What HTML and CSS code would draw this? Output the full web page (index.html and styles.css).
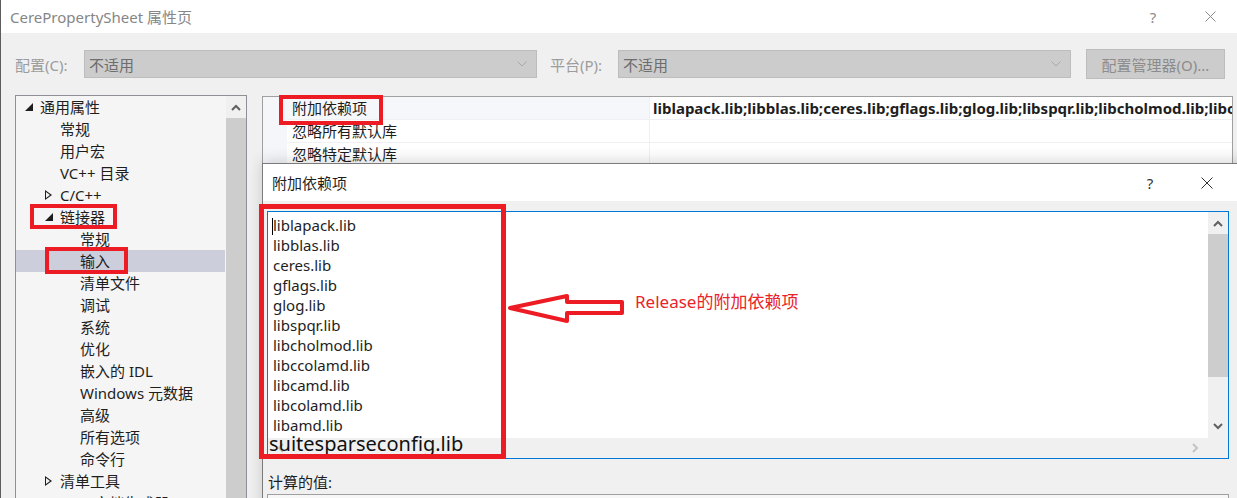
FILE: index.html
```html
<!DOCTYPE html>
<html lang="zh-CN">
<head>
    <meta charset="UTF-8">
    <title>CerePropertySheet 属性页</title>
    <link rel="stylesheet" href="styles.css">
</head>
<body>
    <!-- 属性页主窗口 -->
    <div class="window">
        <div class="titlebar">
            <span class="title">CerePropertySheet 属性页</span>
            <div class="caption">
                <span class="cap-btn help">?</span>
                <span class="cap-btn close">
                    <svg width="11" height="11" viewBox="0 0 11 11"><path d="M0.5 0.5 L10.5 10.5 M10.5 0.5 L0.5 10.5" stroke="#8a8a8a" stroke-width="1" fill="none"/></svg>
                </span>
            </div>
        </div>

        <div class="config-bar">
            <label class="lbl-config">配置(C):</label>
            <div class="combo">
                <span>不适用</span>
                <svg width="10" height="6" viewBox="0 0 10 6"><path d="M0.5 0.5 L5 5 L9.5 0.5" stroke="#a8a8a8" fill="none"/></svg>
            </div>
            <label class="lbl-platform">平台(P):</label>
            <div class="combo">
                <span>不适用</span>
                <svg width="10" height="6" viewBox="0 0 10 6"><path d="M0.5 0.5 L5 5 L9.5 0.5" stroke="#a8a8a8" fill="none"/></svg>
            </div>
            <button class="manager-btn">配置管理器(O)...</button>
        </div>

        <div class="main">
            <div class="tree">
                <ul class="tree-list">
                    <li class="lv0"><span class="exp open"></span>通用属性</li>
                    <li class="lv1"><span class="exp"></span>常规</li>
                    <li class="lv1"><span class="exp"></span>用户宏</li>
                    <li class="lv1"><span class="exp"></span>VC++ 目录</li>
                    <li class="lv1"><span class="exp shut"></span>C/C++</li>
                    <li class="lv1"><span class="exp open"></span>链接器</li>
                    <li class="lv2"><span class="exp"></span>常规</li>
                    <li class="lv2 selected"><span class="exp"></span>输入</li>
                    <li class="lv2"><span class="exp"></span>清单文件</li>
                    <li class="lv2"><span class="exp"></span>调试</li>
                    <li class="lv2"><span class="exp"></span>系统</li>
                    <li class="lv2"><span class="exp"></span>优化</li>
                    <li class="lv2"><span class="exp"></span>嵌入的 IDL</li>
                    <li class="lv2"><span class="exp"></span>Windows 元数据</li>
                    <li class="lv2"><span class="exp"></span>高级</li>
                    <li class="lv2"><span class="exp"></span>所有选项</li>
                    <li class="lv2"><span class="exp"></span>命令行</li>
                    <li class="lv1"><span class="exp shut"></span>清单工具</li>
                    <li class="lv1"><span class="exp shut"></span>XML 文档生成器</li>
                </ul>
                <div class="vscroll">
                    <div class="arrow-btn">
                        <svg width="10" height="7" viewBox="0 0 10 7"><path d="M1 6 L5 2 L9 6" stroke="#606060" stroke-width="2" fill="none"/></svg>
                    </div>
                    <div class="thumb tree-thumb"></div>
                </div>
            </div>

            <div class="grid">
                <div class="row">
                    <div class="gutter"></div>
                    <div class="name current">附加依赖项</div>
                    <div class="value">liblapack.lib;libblas.lib;ceres.lib;gflags.lib;glog.lib;libspqr.lib;libcholmod.lib;libccolamd.lib;libcamd.lib;libcolamd.lib;libamd.lib;suitesparseconfig.lib;%(AdditionalDependencies)</div>
                </div>
                <div class="row">
                    <div class="gutter"></div>
                    <div class="name">忽略所有默认库</div>
                    <div class="value"></div>
                </div>
                <div class="row">
                    <div class="gutter"></div>
                    <div class="name">忽略特定默认库</div>
                    <div class="value"></div>
                </div>
            </div>
        </div>
    </div>

    <!-- 附加依赖项 编辑对话框 -->
    <div class="dialog">
        <div class="dialog-title">
            <span class="title">附加依赖项</span>
            <div class="caption">
                <span class="cap-btn help">?</span>
                <span class="cap-btn close">
                    <svg width="12" height="12" viewBox="0 0 12 12"><path d="M0.5 0.5 L11.5 11.5 M11.5 0.5 L0.5 11.5" stroke="#333" stroke-width="1" fill="none"/></svg>
                </span>
            </div>
        </div>
        <div class="dialog-body">
            <div class="editbox">
                <div class="edit-text">
                    <div class="line"><span class="caret"></span>liblapack.lib</div>
                    <div class="line">libblas.lib</div>
                    <div class="line">ceres.lib</div>
                    <div class="line">gflags.lib</div>
                    <div class="line">glog.lib</div>
                    <div class="line">libspqr.lib</div>
                    <div class="line">libcholmod.lib</div>
                    <div class="line">libccolamd.lib</div>
                    <div class="line">libcamd.lib</div>
                    <div class="line">libcolamd.lib</div>
                    <div class="line">libamd.lib</div>
                    <div class="line big">suitesparseconfig.lib</div>
                </div>
                <div class="vscroll edit-vscroll">
                    <div class="arrow-btn">
                        <svg width="10" height="7" viewBox="0 0 10 7"><path d="M1 6 L5 2 L9 6" stroke="#606060" stroke-width="2" fill="none"/></svg>
                    </div>
                    <div class="thumb edit-thumb"></div>
                    <div class="spacer"></div>
                    <div class="arrow-btn down">
                        <svg width="10" height="7" viewBox="0 0 10 7"><path d="M1 1 L5 5 L9 1" stroke="#606060" stroke-width="2" fill="none"/></svg>
                    </div>
                </div>
                <div class="hscroll">
                    <svg width="7" height="10" viewBox="0 0 7 10"><path d="M6 1 L2 5 L6 9" stroke="#c4c4c4" stroke-width="2" fill="none"/></svg>
                    <svg width="7" height="10" viewBox="0 0 7 10"><path d="M1 1 L5 5 L1 9" stroke="#c4c4c4" stroke-width="2" fill="none"/></svg>
                </div>
                <div class="corner"></div>
            </div>
            <div class="result-label">计算的值:</div>
            <div class="result-box"></div>
        </div>
    </div>

    <!-- 红框标注 -->
    <div class="mark mark-dep"></div>
    <div class="mark mark-linker"></div>
    <div class="mark mark-input"></div>
    <div class="mark mark-list"></div>

    <svg class="callout-arrow" width="130" height="40" viewBox="0 0 130 40">
        <path d="M10 18 L67 6 L67 12 L122 12 L122 23 L67 23 L67 31 Z" stroke="#ed1c24" stroke-width="4" stroke-linejoin="round" fill="none"/>
    </svg>
    <div class="callout-text">Release的附加依赖项</div>
</body>
</html>
```

FILE: styles.css
```css
* {
    box-sizing: border-box;
}

html, body {
    margin: 0;
    padding: 0;
}

body {
    position: relative;
    width: 1237px;
    height: 498px;
    overflow: hidden;
    background-color: #f0f0f0;
    font-family: "Noto Sans", "Noto Sans CJK SC", sans-serif;
    font-size: 15px;
    color: #1e1e1e;
}

.window {
    height: 498px;
    border-left: 1px solid #5c5c5c;
}

/* 标题栏 */
.titlebar {
    height: 33px;
    background-color: #fff;
    display: flex;
    align-items: center;
    padding-left: 9px;
    padding-right: 4px;
}

.title {
    flex: 1;
    color: #868686;
    white-space: nowrap;
}

.caption {
    display: flex;
    align-items: center;
}

.cap-btn {
    width: 46px;
    display: flex;
    justify-content: center;
    align-items: center;
}

.cap-btn.close {
    margin-left: 11px;
}

.help {
    color: #8a8a8a;
    font-size: 15px;
}

/* 配置 / 平台 */
.config-bar {
    height: 62px;
    display: flex;
    align-items: center;
    padding-left: 14px;
}

.config-bar label {
    color: #9c9c9c;
    white-space: nowrap;
}

.lbl-config {
    width: 69px;
}

.lbl-platform {
    width: 68px;
    margin-left: 13px;
}

.combo {
    width: 453px;
    height: 28px;
    border: 1px solid #bdbdbd;
    background-color: #cccccc;
    color: #6d6d6d;
    display: flex;
    align-items: center;
    justify-content: space-between;
    padding: 0 9px 0 4px;
}

.manager-btn {
    margin-left: 15px;
    width: 139px;
    height: 30px;
    border: 1px solid #bdbdbd;
    background-color: #cccccc;
    color: #8c8c8c;
    font: inherit;
    padding: 0;
}

/* 左侧树 */
.main {
    display: flex;
    align-items: flex-start;
    padding-left: 14px;
}

.tree {
    width: 232px;
    height: 420px;
    border: 1px solid #8f9096;
    background-color: #f5f5f5;
    display: flex;
}

.tree-list {
    flex: 1;
    list-style: none;
    margin: 0;
    padding: 0;
}

.tree-list li {
    height: 22px;
    line-height: 22px;
    display: flex;
    align-items: center;
    white-space: nowrap;
    margin-right: 1px;
}

.lv0 { padding-left: 9px; }
.lv1 { padding-left: 29px; }
.lv2 { padding-left: 49px; }

.tree-list li.selected {
    background-color: #cccedb;
}

.exp {
    width: 15px;
    height: 10px;
    flex-shrink: 0;
    position: relative;
}

/* 展开: 实心三角 */
.exp.open::before {
    content: "";
    position: absolute;
    left: 0;
    top: 1px;
    border-style: solid;
    border-width: 0 0 8px 8px;
    border-color: transparent transparent #1e1e1e transparent;
}

/* 折叠: 空心三角 */
.exp.shut::before {
    content: "";
    position: absolute;
    left: 0;
    top: 0;
    border-style: solid;
    border-width: 5px 0 5px 7px;
    border-color: transparent transparent transparent #1e1e1e;
}

.exp.shut::after {
    content: "";
    position: absolute;
    left: 1px;
    top: 2px;
    border-style: solid;
    border-width: 3px 0 3px 4px;
    border-color: transparent transparent transparent #f5f5f5;
}

.vscroll {
    width: 20px;
    background-color: #f0f0f0;
    display: flex;
    flex-direction: column;
}

.arrow-btn {
    height: 22px;
    display: flex;
    justify-content: center;
    align-items: center;
    flex-shrink: 0;
}

.thumb {
    background-color: #cdcdcd;
}

.tree-thumb {
    flex: 1;
}

/* 属性网格 */
.grid {
    margin-left: 15px;
    margin-top: 1px;
    width: 971px;
    height: 90px;
    border: 1px solid #a0a0a0;
    background-color: #fff;
}

.row {
    display: grid;
    grid-template-columns: 24px 363px 1fr;
    height: 23px;
}

.gutter {
    background-color: #f4f6fa;
}

.name,
.value {
    line-height: 22px;
    border-bottom: 1px solid #eef0f3;
    white-space: nowrap;
    overflow: hidden;
}

.name {
    padding-left: 5px;
    border-right: 1px solid #eef0f3;
}

.name.current {
    background-color: #f5f7fa;
}

.value {
    padding-left: 3px;
    font-weight: bold;
}

/* 对话框 */
.dialog {
    position: absolute;
    left: 262px;
    top: 163px;
    width: 1000px;
    height: 360px;
    border: 1px solid #7b7b7b;
    background-color: #f0f0f0;
    box-shadow: 0 -2px 14px rgba(0, 0, 0, 0.16);
}

.dialog-title {
    height: 37px;
    background-color: #fff;
    display: flex;
    align-items: center;
    padding-left: 9px;
    padding-right: 31px;
}

.dialog-title .title {
    color: #1e1e1e;
}

.dialog-title .help {
    color: #333;
}

.dialog-body {
    padding: 10px 0 0 4px;
}

.editbox {
    width: 962px;
    height: 248px;
    border: 1px solid #0078d7;
    display: grid;
    grid-template-columns: 1fr 20px;
    grid-template-rows: 226px 20px;
}

.edit-text {
    position: relative;
    z-index: 1;
    background-color: #fff;
    padding: 3px 0 0 5px;
    color: #1e1e1e;
}

.line {
    height: 20px;
    line-height: 20px;
    white-space: nowrap;
}

.line.big {
    font-size: 20px;
    margin-left: -4px;
    margin-top: -1px;
    color: #111;
}

.caret {
    display: inline-block;
    width: 1px;
    height: 17px;
    background-color: #000;
    vertical-align: middle;
    margin-left: -1px;
}

.edit-vscroll {
    width: auto;
}

.edit-thumb {
    height: 143px;
    flex-shrink: 0;
}

.spacer {
    flex: 1;
}

.arrow-btn.down {
    height: 24px;
}

.hscroll {
    background-color: #f0f0f0;
    display: flex;
    align-items: center;
    justify-content: space-between;
    padding: 0 9px 0 9px;
}

.corner {
    background-color: #f0f0f0;
}

.result-label {
    margin-top: 12px;
    height: 22px;
    line-height: 22px;
    padding-left: 1px;
}

.result-box {
    margin-top: 1px;
    width: 962px;
    height: 40px;
    border: 1px solid #a0a0a0;
    background-color: #f7f7f7;
}

/* 标注, 画在对话框之上 */
.mark,
.callout-arrow,
.callout-text {
    position: absolute;
    z-index: 5;
}

.mark {
    border: 4px solid #ed1c24;
}

.mark-dep {
    left: 279px;
    top: 95px;
    width: 104px;
    height: 30px;
}

.mark-linker {
    left: 30px;
    top: 204px;
    width: 87px;
    height: 25px;
}

.mark-input {
    left: 45px;
    top: 247px;
    width: 83px;
    height: 27px;
}

.mark-list {
    left: 259px;
    top: 204px;
    width: 247px;
    height: 255px;
    border-width: 5px;
}

.callout-arrow {
    left: 500px;
    top: 290px;
}

.callout-text {
    left: 635px;
    top: 289px;
    line-height: 26px;
    font-size: 17px;
    color: #ea232a;
}
```
